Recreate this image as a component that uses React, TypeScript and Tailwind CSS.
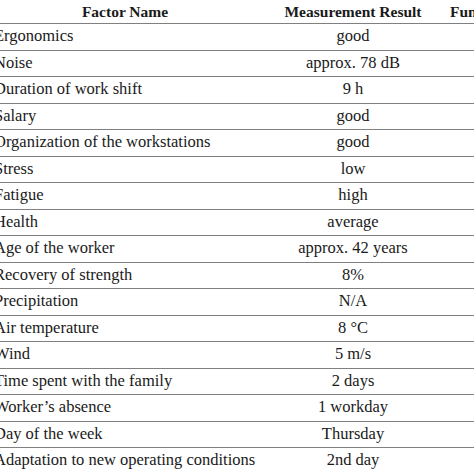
const rows: [string, string][] = [
  ['Ergonomics', 'good'],
  ['Noise', 'approx. 78 dB'],
  ['Duration of work shift', '9 h'],
  ['Salary', 'good'],
  ['Organization of the workstations', 'good'],
  ['Stress', 'low'],
  ['Fatigue', 'high'],
  ['Health', 'average'],
  ['Age of the worker', 'approx. 42 years'],
  ['Recovery of strength', '8%'],
  ['Precipitation', 'N/A'],
  ['Air temperature', '8 °C'],
  ['Wind', '5 m/s'],
  ['Time spent with the family', '2 days'],
  ['Worker\u2019s absence', '1 workday'],
  ['Day of the week', 'Thursday'],
  ['Adaptation to new operating conditions', '2nd day'],
];

export default function App() {
  return (
    <div
      className="w-[474px] h-[474px] overflow-hidden bg-white text-[#1a1a1a]"
      style={{ fontFamily: '"Liberation Serif", "DejaVu Serif", serif' }}
    >
      <div className="-ml-[6px] w-[520px]">
        <div className="grid grid-cols-[262px_194px_1fr] h-[24px] items-center border-b-[1.5px] border-[#808080] text-[15.5px] font-bold">
          <div className="text-center">Factor Name</div>
          <div className="text-center">Measurement Result</div>
          <div className="whitespace-nowrap">Function Value</div>
        </div>
        {rows.map(([name, value]) => (
          <div
            key={name}
            className="grid grid-cols-[262px_194px_1fr] h-[26.5px] items-center border-b-[1.5px] border-[#808080] text-[16.5px]"
          >
            <div className="whitespace-nowrap">{name}</div>
            <div className="text-center whitespace-nowrap">{value}</div>
            <div />
          </div>
        ))}
      </div>
    </div>
  );
}
